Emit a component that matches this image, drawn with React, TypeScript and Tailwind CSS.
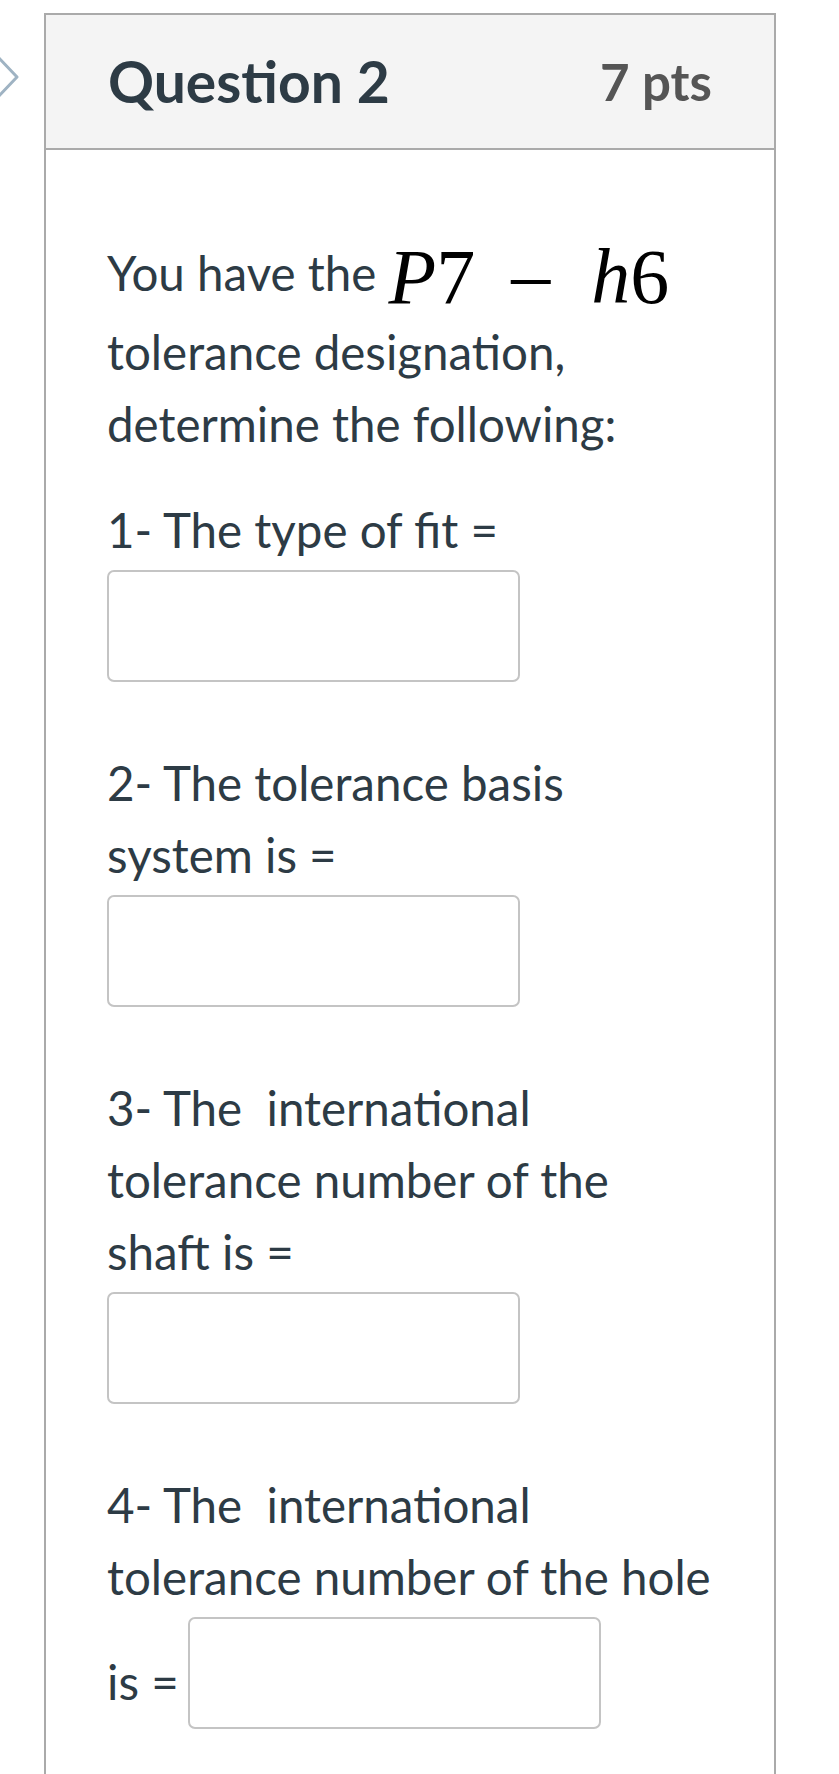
import React from 'react';

function AnswerBox({ className = '' }: { className?: string }) {
  return (
    <div
      className={`h-[112px] w-[413px] shrink-0 rounded-[7px] border-2 border-[#c4c4c4] bg-white ${className}`}
    />
  );
}

function Designation() {
  return (
    <span className="inline-block align-[-12px] font-['Liberation_Serif',serif] text-[78px] leading-none text-black">
      <i>P</i>7
      <span className="relative -top-[3px] ml-[36px] mr-[41px]">&ndash;</span>
      <i>h</i>6
    </span>
  );
}

export default function App() {
  return (
    <div className="flex min-h-[1774px] items-start bg-white font-['Lato',sans-serif]">
      <svg
        className="mt-[50px] h-[60px] w-[22px] shrink-0"
        viewBox="0 0 22 60"
        fill="none"
        stroke="#9fb3c3"
        strokeWidth="3"
        strokeLinecap="round"
        strokeLinejoin="round"
      >
        <path d="M-3 6 L17 27 L-3 48" />
      </svg>

      <div className="ml-[22px] mt-[13px] w-[732px] border-2 border-b-0 border-[#aaaaaa]">
        <div className="flex h-[135px] items-center justify-between border-b-2 border-[#aaaaaa] bg-[#f4f4f4] pl-[62px] pr-[62px]">
          <h2 className="text-[57px] font-bold leading-none text-[#2d3b45]">Question 2</h2>
          <span className="text-[51px] font-bold leading-none text-[#555555]">7 pts</span>
        </div>

        <div className="pb-[50px] pl-[61px] pr-[40px] pt-[87px] text-[47.5px] leading-[72px] text-[#2d3b45]">
          <p>
            You have the <Designation />
            <br />
            tolerance designation,
            <br />
            determine the following:
          </p>

          <p className="mt-[34px]">1- The type of fit =</p>
          <AnswerBox className="mt-[4px]" />

          <p className="mt-[65px]">
            2- The tolerance basis
            <br />
            system is =
          </p>
          <AnswerBox className="mt-[4px]" />

          <p className="mt-[65px]">
            3- The&nbsp; international
            <br />
            tolerance number of the
            <br />
            shaft is =
          </p>
          <AnswerBox className="mt-[4px]" />

          <p className="mt-[65px]">
            4- The&nbsp; international
            <br />
            tolerance number of the hole
          </p>
          <div className="mt-[4px] flex items-end">
            <span className="mb-[11px]">is =</span>
            <AnswerBox className="ml-[9px]" />
          </div>
        </div>
      </div>
    </div>
  );
}
